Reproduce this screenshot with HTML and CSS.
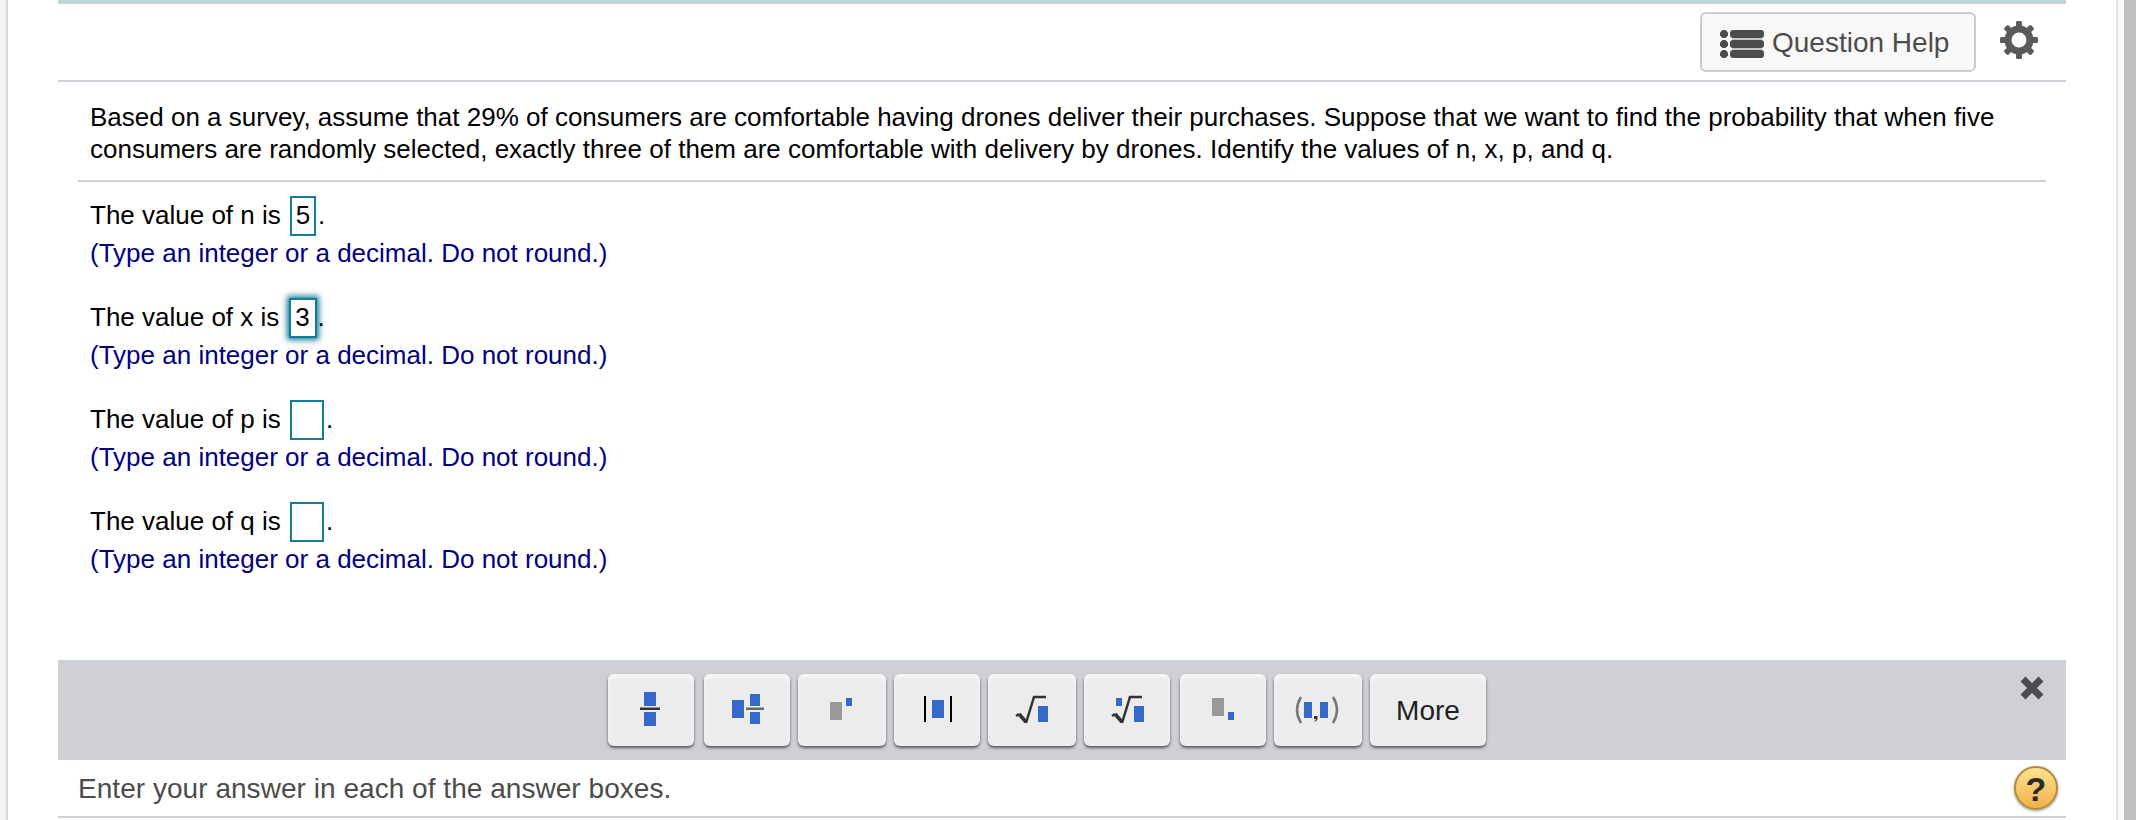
FILE: index.html
```html
<!DOCTYPE html>
<html lang="en">
<head>
  <meta charset="UTF-8">
  <title>Question</title>
  <link rel="stylesheet" href="styles.css">
</head>
<body>

  <div class="page">
    <div class="exercise">

      <div class="top-bar">
        <button class="help-btn">
          <svg class="list-icon" width="44" height="28" viewBox="0 0 44 28" fill="#4c4c4c">
            <path d="M2.500 0h3l2.500 2.500v3l-2.500 2.500h-3l-2.500-2.500v-3z"/>
            <path d="M2.500 10h3l2.500 2.500v3l-2.500 2.500h-3l-2.500-2.500v-3z"/>
            <path d="M2.500 20h3l2.500 2.500v3l-2.500 2.500h-3l-2.500-2.500v-3z"/>
            <rect x="10" y="0" width="34" height="8" rx="3"/>
            <rect x="10" y="10" width="34" height="8" rx="3"/>
            <rect x="10" y="20" width="34" height="8" rx="3"/>
            <path d="M12 8h30v2h-30zM12 18h30v2h-30z" fill="#c4c4c4"/>
          </svg>
          <span class="help-label">Question Help</span>
        </button>
        <svg class="gear" width="40" height="40" viewBox="-20 -20 40 40">
          <g fill="#5a5a5a">
            <g id="teeth">
              <rect x="-3" y="-19" width="6" height="38" rx="1.500"/>
              <rect x="-19" y="-3" width="38" height="6" rx="1.500"/>
            </g>
            <use href="#teeth" transform="rotate(45)"/>
            <circle r="14.500"/>
          </g>
          <circle r="7.500" fill="#fff"/>
        </svg>
      </div>

      <div class="question">
        Based on a survey, assume that 29% of consumers are comfortable having drones deliver their purchases. Suppose that we want to find the probability that when five<br>
        consumers are randomly selected, exactly three of them are comfortable with delivery by drones. Identify the values of n, x, p, and q.
      </div>

      <div class="answers">
        <div class="answer">
          <div class="value">The value of n is <span class="box">5</span>.</div>
          <div class="hint">(Type an integer or a decimal. Do not round.)</div>
        </div>
        <div class="answer">
          <div class="value">The value of x is <span class="box active">3</span>.</div>
          <div class="hint">(Type an integer or a decimal. Do not round.)</div>
        </div>
        <div class="answer">
          <div class="value">The value of p is <span class="box empty"></span>.</div>
          <div class="hint">(Type an integer or a decimal. Do not round.)</div>
        </div>
        <div class="answer">
          <div class="value">The value of q is <span class="box empty"></span>.</div>
          <div class="hint">(Type an integer or a decimal. Do not round.)</div>
        </div>
      </div>

      <div class="palette">
        <!-- fraction -->
        <button class="key spaced">
          <svg width="86" height="72" viewBox="0 0 86 72">
            <path class="blue" d="M36 18h12v14h-12zM36 38h12v14h-12z"/>
            <path class="bar" d="M32 33.500h20v2.500h-20z"/>
          </svg>
        </button>
        <!-- mixed number -->
        <button class="key">
          <svg width="86" height="72" viewBox="0 0 86 72">
            <path class="blue" d="M28 26h12v18h-12zM46 20h10v12h-10zM46 38h10v12h-10z"/>
            <path class="bar light" d="M42 33.500h18v2.500h-18z"/>
          </svg>
        </button>
        <!-- exponent -->
        <button class="key wide">
          <svg width="86" height="72" viewBox="0 0 86 72">
            <path class="grey" d="M32 28h12v18h-12z"/>
            <path class="blue" d="M48 24h6v8h-6z"/>
          </svg>
        </button>
        <!-- absolute value -->
        <button class="key">
          <svg width="86" height="72" viewBox="0 0 86 72">
            <path class="blue" d="M38 26h12v18h-12z"/>
            <path d="M30 22h2v26h-2zM56 22h2v26h-2z"/>
          </svg>
        </button>
        <!-- square root -->
        <button class="key wide">
          <svg width="86" height="72" viewBox="0 0 86 72">
            <path class="blue" d="M50 32h10v16h-10z"/>
            <path class="thin" d="M28 42l3-2"/>
            <path class="thick" d="M31 40l7 8"/>
            <path class="root" d="M38 49l8-26h12"/>
          </svg>
        </button>
        <!-- nth root -->
        <button class="key spaced">
          <svg width="86" height="72" viewBox="0 0 86 72">
            <path class="blue" d="M32 24h6v8h-6zM50 32h10v16h-10z"/>
            <path class="thin" d="M28 42l3-2"/>
            <path class="thick" d="M31 40l7 8"/>
            <path class="root" d="M38 49l8-26h12"/>
          </svg>
        </button>
        <!-- subscript -->
        <button class="key">
          <svg width="86" height="72" viewBox="0 0 86 72">
            <path class="grey" d="M32 24h12v18h-12z"/>
            <path class="blue" d="M48 38h6v8h-6z"/>
          </svg>
        </button>
        <!-- ordered pair -->
        <button class="key wide">
          <svg width="86" height="72" viewBox="0 0 86 72">
            <path class="blue" d="M30 28h8v16h-8zM46 28h8v16h-8z"/>
            <path class="paren" d="M27 23q-8 13 0 26M59 23q8 13 0 26"/>
            <path class="bar" d="M40 42h3.500v3q-.5 2-3 3v-1q1.500-.5 1.500-2h-2z"/>
          </svg>
        </button>
        <button class="key more">More</button>
        <svg class="close" width="24" height="24" viewBox="0 0 24 24">
          <path d="M3 3l18 18M21 3l-18 18" stroke="#4c4c4c" stroke-width="7"/>
        </svg>
      </div>

      <div class="footer">
        <span class="footer-text">Enter your answer in each of the answer boxes.</span>
        <span class="help-icon">?</span>
      </div>

    </div>
  </div>

</body>
</html>
```
FILE: styles.css
```css
* {
  box-sizing: border-box;
}

body {
  margin: 0;
  height: 820px;
  overflow: hidden;
  font-family: "Liberation Sans", Arial, sans-serif;
  font-size: 26px;
  color: #000;
  background: #fff;
  border-left: 6px solid #f4f4f4;
  border-right: 12px solid #c1c1c1;
}

.page {
  height: 820px;
  padding: 0 50px;
  border-left: 2px solid #d8d8d8;
  border-right: 2px solid #e6e6e6;
  margin-right: 6px;
  box-shadow: 6px 0 0 #fafafa;
}

.exercise {
  border-top: 2px solid #bcd8d6;
}

.top-bar {
  display: flex;
  justify-content: flex-end;
  align-items: flex-start;
  gap: 23px;
  height: 80px;
  padding: 8px 27px 0 0;
  border-top: 2px solid #cad0da;
  border-bottom: 2px solid #ccd0dc;
}

.help-btn {
  display: flex;
  align-items: center;
  gap: 8px;
  width: 276px;
  height: 60px;
  padding: 0 0 0 18px;
  background: #f8f8f8;
  border: 2px solid #ccc;
  border-radius: 6px;
  font-family: inherit;
  font-size: 28px;
  color: #4c4c4c;
}

.list-icon {
  margin-top: 4px;
}

.help-label {
  margin-top: 2px;
  white-space: nowrap;
}

.gear {
  margin-top: 8px;
}

.question {
  height: 100px;
  margin: 0 20px;
  padding: 19px 0 0 12px;
  line-height: 32px;
  white-space: nowrap;
  border-bottom: 2px solid #ccd0dc;
}

.answers {
  height: 478px;
  padding: 14px 0 0 32px;
}

.answer {
  height: 102px;
}

.value {
  display: flex;
  height: 40px;
  line-height: 38px;
  white-space: pre;
}

.box {
  width: 26px;
  height: 40px;
  line-height: 34px;
  margin: 0 2px;
  border: 2px solid #147a99;
  text-align: center;
}

.active {
  width: 28px;
  margin-right: 1px;
  box-shadow: 0 0 6px 2px #147a99;
}

.empty {
  width: 34px;
}

.hint {
  line-height: 34px;
  color: #000080;
}

.palette {
  position: relative;
  display: flex;
  gap: 8px;
  height: 100px;
  padding: 12px 0 0 550px;
  background: #cfd0d6;
  border-top: 2px solid #cad0da;
}

.key {
  flex: none;
  width: 86px;
  height: 72px;
  padding: 0;
  border: none;
  border-radius: 6px;
  background: #ececec;
  box-shadow: 0 2px 3px #55555a, inset 0 3px 4px #f8f8f8;
  font-family: inherit;
}

.key svg {
  display: block;
}

.wide {
  width: 88px;
}

.spaced {
  margin-right: 2px;
}

.more {
  width: 116px;
  padding-top: 2px;
  font-size: 28px;
  color: #222;
}

.blue {
  fill: #3769cb;
}

.grey {
  fill: #999;
}

.bar {
  fill: #333;
}

.light {
  fill: #666;
}

.root, .thin, .thick, .paren {
  fill: none;
  stroke: #333;
  stroke-width: 2.5;
}

.thick {
  stroke-width: 3.5;
}

.paren {
  stroke: #777;
}

.close {
  position: absolute;
  top: 14px;
  right: 22px;
}

.footer {
  display: flex;
  justify-content: space-between;
  height: 58px;
  padding: 6px 8px 0 20px;
  border-bottom: 2px solid #ccd0dc;
}

.footer-text {
  font-size: 28px;
  line-height: 46px;
  letter-spacing: 0.04px;
  color: #4c4c4c;
}

.help-icon {
  width: 44px;
  height: 44px;
  border: 2px solid #b08a3c;
  border-radius: 50%;
  background: linear-gradient(#fde38e, #f0b04a);
  box-shadow: 0 1px 3px #999;
  text-align: center;
  font-size: 34px;
  font-weight: bold;
  line-height: 42px;
  color: #2a2a2a;
}
```
